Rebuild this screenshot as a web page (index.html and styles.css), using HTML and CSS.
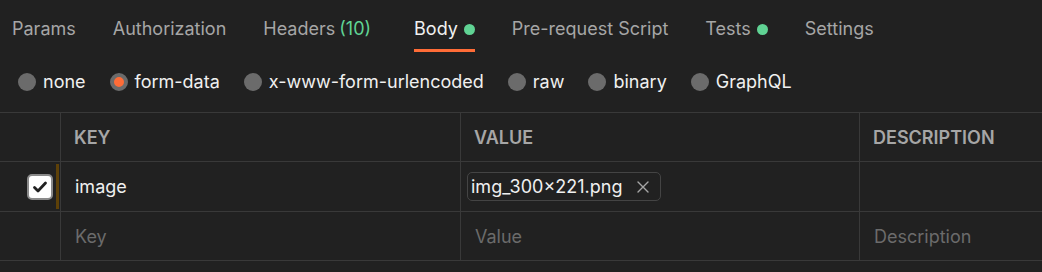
FILE: index.html
```html
<!DOCTYPE html>
<html lang="en">
<head>
    <meta charset="UTF-8">
    <title>Request Body</title>
    <link rel="stylesheet" href="styles.css">
</head>
<body>
    <!-- Request tabs -->
    <div class="tabs">
        <div class="tab">Params</div>
        <div class="tab">Authorization</div>
        <div class="tab headers-tab">Headers <span class="count">(10)</span></div>
        <div class="tab active">Body <span class="dot"></span></div>
        <div class="tab">Pre-request Script</div>
        <div class="tab">Tests <span class="dot"></span></div>
        <div class="tab">Settings</div>
    </div>

    <!-- Body type -->
    <div class="body-types">
        <label class="body-type"><span class="radio"></span>none</label>
        <label class="body-type"><span class="radio checked"></span>form-data</label>
        <label class="body-type"><span class="radio"></span>x-www-form-urlencoded</label>
        <label class="body-type"><span class="radio"></span>raw</label>
        <label class="body-type"><span class="radio"></span>binary</label>
        <label class="body-type"><span class="radio"></span>GraphQL</label>
    </div>

    <!-- Form data table -->
    <div class="kv-table">
        <div class="cell handle-cell"></div>
        <div class="cell head">KEY</div>
        <div class="cell head">VALUE</div>
        <div class="cell head">DESCRIPTION</div>

        <div class="cell handle-cell">
            <span class="checkbox">
                <svg width="18" height="18" viewBox="0 0 18 18"><path d="M3.5 9.5l3.5 3.5 7.5-8" fill="none" stroke="#212121" stroke-width="2.8" stroke-linecap="round" stroke-linejoin="round"/></svg>
            </span>
            <span class="row-bar"></span>
        </div>
        <div class="cell">image</div>
        <div class="cell file-cell">
            <span class="file-chip">img_300×221.png
                <svg class="remove" width="12" height="12" viewBox="0 0 12 12"><path d="M1 1l10 10M11 1L1 11" stroke="#a6a6a6" stroke-width="1.4" stroke-linecap="round"/></svg>
            </span>
        </div>
        <div class="cell"></div>

        <div class="cell handle-cell"></div>
        <div class="cell placeholder">Key</div>
        <div class="cell placeholder">Value</div>
        <div class="cell placeholder">Description</div>
    </div>
</body>
</html>
```

FILE: styles.css
```css
* {
    margin: 0;
    padding: 0;
    box-sizing: border-box;
    font-family: 'Inter', 'Noto Sans', sans-serif;
}

body {
    background-color: #212121;
    color: #f0f0f0;
    font-size: 18px;
    width: 1042px;
    height: 272px;
    overflow: hidden;
}

.tabs {
    display: flex;
    gap: 37px;
    padding-left: 12px;
}

.tab {
    display: flex;
    align-items: center;
    gap: 6px;
    color: #a6a6a6;
    line-height: 24px;
    padding: 17px 0 8px;
    border-bottom: 3px solid transparent;
}

.headers-tab {
    margin-right: 6px;
}

.tab.active {
    color: #f0f0f0;
    border-bottom-color: #ff6c37;
}

.count {
    color: #60d394;
    margin-left: -2px;
}

.dot {
    width: 11px;
    height: 11px;
    border-radius: 50%;
    background: #60d394;
}

.body-types {
    display: flex;
    gap: 24px;
    padding-left: 18px;
    margin-top: 18px;
}

.body-type {
    display: flex;
    align-items: center;
    gap: 7px;
    line-height: 24px;
    color: #f0f0f0;
}

.radio {
    width: 18px;
    height: 18px;
    border-radius: 50%;
    background: #6b6b6b;
}

.radio.checked {
    border: 4px solid #6b6b6b;
    background: #ff6c37;
}

.kv-table {
    display: grid;
    grid-template-columns: 60px 400px 399px 1fr;
    grid-template-rows: 49px 50px 49px;
    margin-top: 18px;
    border-top: 1px solid #393939;
}

.cell {
    display: flex;
    align-items: center;
    padding-left: 14px;
    border-bottom: 1px solid #393939;
    border-left: 1px solid #393939;
}

.handle-cell {
    border-left: none;
    padding-left: 0;
    justify-content: flex-end;
    gap: 3px;
    padding-right: 1px;
}

.head {
    color: #a6a6a6;
    font-weight: 600;
    padding-left: 13px;
}

.placeholder {
    color: #6b6b6b;
}

.checkbox {
    width: 26px;
    height: 26px;
    border: 2px solid #8a8a8a;
    border-radius: 5px;
    background: #ffffff;
    display: flex;
    align-items: center;
    justify-content: center;
}

.row-bar {
    width: 3px;
    height: 45px;
    background: #5e4108;
}

.file-cell {
    padding-left: 6px;
}

.file-chip {
    display: flex;
    align-items: center;
    height: 29px;
    padding: 0 11px 0 3px;
    border: 1.5px solid #444444;
    border-radius: 5px;
    color: #f0f0f0;
}

.remove {
    margin-left: 15px;
}
```
